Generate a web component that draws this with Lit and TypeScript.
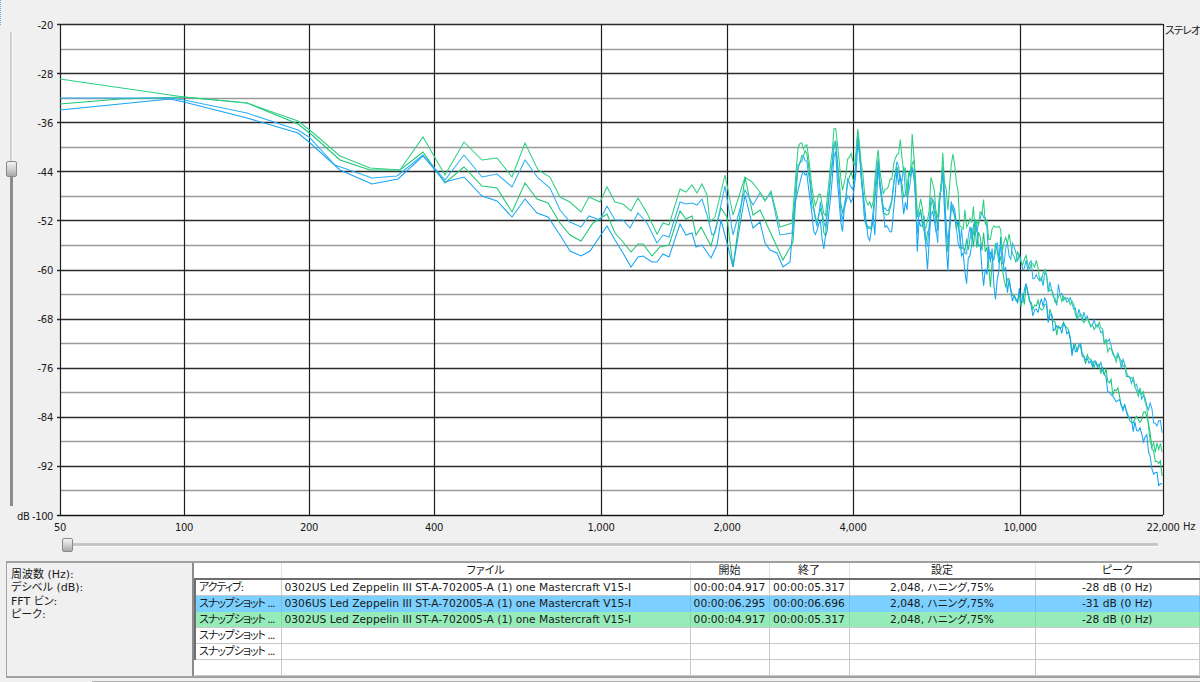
import { LitElement, html, css, svg } from "lit";
import { customElement } from "lit/decorators.js";

type P = [number, number];

const GU0: P[] = [[60,79],[184,97],[247,103],[298,121],[312,132],[340,156],[370,168],[400,170],[423,137],[445,175],[464,142],[482,160],[497,158],[512,177],[525,143],[538,170],[550,177],[560,197],[570,202],[581,212],[589,197],[600,202],[607,187],[615,202],[623,204],[631,211],[638,198],[647,213],[657,234],[663,223],[669,225],[680,189],[686,192],[692,185],[697,193],[702,184],[707,195],[710,222],[715,217],[725,175],[733,215],[745,177],[752,182],[760,192],[765,201],[771,191],[780,227],[792,223],[798,148],[807,143],[812,190],[816,207],[820,190],[825,223],[835,120],[842,193],[850,150],[854,167],[858,127],[865,200],[872,210],[878,150],[883,193],[889,188],[897,153],[902,153],[907,183],[913,142],[918,210],[920,192],[927,227],[932,172],[937,217],[943,152],[947,210],[952,157],[957,197],[962,227],[972,207],[977,223],[982,197],[990,243],[998,210],[1002,243],[1007,227],[1012,254],[1022,260],[1033,270],[1047,280],[1053,293],[1067,300],[1077,313],[1088,322],[1100,328],[1107,343],[1118,357],[1127,373],[1137,387],[1147,405],[1150,440],[1163,450]];
const GL0: P[] = [[60,104],[120,99],[184,97],[247,103],[298,124],[312,135],[340,160],[370,170],[400,170],[423,152],[445,183],[464,167],[482,186],[497,188],[512,212],[525,183],[537,199],[548,203],[560,223],[570,235],[581,241],[593,223],[607,214],[615,233],[623,242],[631,252],[638,244],[643,244],[652,256],[660,247],[669,245],[680,211],[686,219],[692,216],[696,235],[701,227],[711,246],[721,208],[727,217],[733,267],[745,177],[753,215],[760,210],[767,225],[773,238],[783,260],[793,242],[798,165],[807,150],[812,200],[817,225],[821,205],[825,240],[835,132],[842,215],[850,172],[854,185],[858,135],[865,222],[872,232],[878,165],[883,213],[890,212],[897,162],[902,180],[907,200],[913,150],[918,228],[921,212],[927,250],[932,180],[937,235],[943,163],[947,240],[952,200],[957,220],[963,250],[972,232],[977,245],[982,232],[988,270],[998,255],[1002,262],[1008,290],[1017,300],[1027,293],[1033,307],[1048,310],[1053,323],[1067,330],[1072,353],[1080,347],[1090,363],[1105,373],[1117,395],[1130,417],[1147,418],[1153,450],[1163,473]];
const BU0: P[] = [[60,98],[170,98],[184,100],[247,113],[298,130],[309,137],[335,165],[372,178],[397,176],[423,155],[445,180],[464,155],[482,177],[497,174],[512,187],[525,160],[538,178],[550,188],[560,210],[570,222],[581,227],[589,216],[600,220],[607,206],[615,220],[623,220],[630,228],[638,213],[647,223],[657,243],[663,235],[669,237],[680,202],[686,204],[692,203],[697,205],[702,199],[707,215],[712,235],[715,233],[725,186],[733,235],[745,190],[753,205],[760,193],[765,200],[771,193],[780,235],[792,233],[797,173],[802,158],[807,158],[812,205],[817,225],[821,200],[825,232],[835,135],[842,225],[848,178],[853,195],[858,133],[865,225],[872,225],[878,158],[883,208],[890,210],[897,160],[902,170],[907,205],[913,150],[918,232],[922,205],[927,250],[932,180],[937,235],[943,165],[947,250],[952,205],[957,225],[963,255],[972,225],[977,240],[982,215],[990,255],[998,240],[1002,255],[1007,247],[1022,260],[1033,270],[1047,280],[1053,293],[1067,300],[1077,313],[1088,322],[1100,328],[1107,343],[1118,357],[1127,373],[1137,387],[1147,403],[1157,420],[1163,433]];
const BL0: P[] = [[60,110],[170,99],[184,102],[247,118],[298,133],[309,142],[340,170],[372,184],[398,179],[423,156],[445,182],[464,177],[482,196],[497,201],[512,217],[525,199],[537,213],[548,217],[560,235],[570,251],[581,256],[590,251],[607,226],[615,240],[623,253],[631,267],[638,257],[643,256],[652,262],[657,262],[663,254],[669,257],[680,224],[686,235],[692,233],[696,247],[702,245],[711,258],[717,245],[721,220],[727,243],[733,267],[745,195],[753,228],[760,222],[765,243],[770,250],[777,253],[783,267],[790,262],[795,203],[802,172],[807,175],[812,215],[815,238],[820,215],[823,253],[828,225],[835,147],[842,240],[845,197],[853,202],[858,143],[869,245],[873,215],[875,237],[878,167],[885,225],[892,233],[897,170],[905,217],[913,160],[918,247],[923,207],[927,270],[932,187],[937,243],[942,173],[948,277],[952,197],[960,243],[967,273],[973,220],[982,263],[986,283],[990,243],[996,297],[1000,253],[1004,263],[1008,290],[1017,300],[1027,293],[1033,307],[1048,310],[1053,323],[1067,330],[1072,353],[1080,347],[1090,363],[1105,373],[1108,393],[1117,400],[1130,420],[1140,433],[1147,443],[1153,470],[1163,485]];

function rng(seed: number) {
  return () => {
    seed = (seed + 0x6d2b79f5) | 0;
    let t = Math.imul(seed ^ (seed >>> 15), 1 | seed);
    t = (t + Math.imul(t ^ (t >>> 7), 61 | t)) ^ t;
    return ((t ^ (t >>> 14)) >>> 0) / 4294967296 - 0.5;
  };
}
function at(a: P[], x: number) {
  for (let i = 1; i < a.length; i++) {
    if (x <= a[i][0]) {
      const [x0, y0] = a[i - 1];
      const [x1, y1] = a[i];
      return y0 + ((y1 - y0) * (x - x0)) / (x1 - x0);
    }
  }
  return a[a.length - 1][1];
}
function amp(x: number) {
  if (x < 800) return 0;
  if (x < 900) return 9;
  if (x < 1010) return 34;
  if (x < 1060) return 20;
  return 15;
}
const STEP = 1.7;
const sharedR = rng(11);
const shared: number[] = Array.from({ length: 260 }, () => sharedR());
function build(a: P[], seed: number) {
  const r = rng(seed);
  const pts: string[] = [];
  for (const [x, y] of a) if (x < 800) pts.push(`${x},${y}`);
  let i = 0;
  for (let x = 800; x <= 1163; x += STEP, i++) {
    const n = amp(x) * (0.45 * shared[i] + 0.8 * r());
    const y = Math.min(at(a, x) + n, 488);
    pts.push(`${x.toFixed(1)},${y.toFixed(1)}`);
  }
  return pts.join(" ");
}
const traces = [
  { d: build(GL0, 3), c: "#1cc674" },
  { d: build(BL0, 5), c: "#14a4f4" },
  { d: build(BU0, 9), c: "#2bb0f5" },
  { d: build(GU0, 7), c: "#2ccf82" },
];

const yTop = 24;
const yStep = 24.55;
const hLines = Array.from({ length: 21 }, (_, i) => ({ y: Math.round(yTop + i * yStep) + 0.5, major: i % 2 === 0 }));
const yLabels = Array.from({ length: 10 }, (_, i) => ({ t: String(-20 - i * 8), y: yTop + i * 2 * yStep }));
const xTicks: [number, string][] = [[60,"50"],[184,"100"],[309,"200"],[434,"400"],[601,"1,000"],[727,"2,000"],[853,"4,000"],[1020,"10,000"],[1163,"22,000"]];

const FILE_A = "0302US Led Zeppelin III ST-A-702005-A (1) one Mastercraft V15-I";
const FILE_B = "0306US Led Zeppelin III ST-A-702005-A (1) one Mastercraft V15-I";
const SET = "2,048, ハニング,75%";
const rows = [
  { cls: "", cells: ["アクティブ:", FILE_A, "00:00:04.917", "00:00:05.317", SET, "-28 dB (0 Hz)"] },
  { cls: "blue", cells: ["スナップショット ...", FILE_B, "00:00:06.295", "00:00:06.696", SET, "-31 dB (0 Hz)"] },
  { cls: "green", cells: ["スナップショット ...", FILE_A, "00:00:04.917", "00:00:05.317", SET, "-28 dB (0 Hz)"] },
  { cls: "", cells: ["スナップショット ...", "", "", "", "", ""] },
  { cls: "", cells: ["スナップショット ...", "", "", "", "", ""] },
  { cls: "", cells: ["", "", "", "", "", ""] },
];

@customElement("app-root")
export class AppRoot extends LitElement {
  static styles = css`
    :host {
      display: block;
      position: relative;
      width: 1200px;
      height: 682px;
      overflow: hidden;
      background: #f0f0f0;
      color: #1a1a1a;
      font: 10.7px "DejaVu Sans", "Noto Sans CJK JP", sans-serif;
      font-feature-settings: "palt";
    }
    .dots { position: absolute; left: 0; top: 0; width: 1px; height: 25px; border-left: 1px dotted #6fa8dc; }
    .top { display: flex; height: 534px; }
    .vslider { width: 17px; flex: none; position: relative; }
    .vtrack-a { position: absolute; left: 10px; top: 32px; width: 2px; height: 130px; background: #cfcfcf; border-right: 1px solid #fafafa; }
    .vtrack-b { position: absolute; left: 10px; top: 176px; width: 3px; height: 330px; background: #8c8c8c; }
    .vthumb { position: absolute; left: 6px; top: 161px; width: 11px; height: 16px; }
    .thumb {
      box-sizing: border-box;
      border: 1px solid #8a8a8a;
      border-radius: 2px;
      background: linear-gradient(#f4f4f4, #c9c9c9 60%, #a8a8a8);
    }
    svg.chart { display: block; width: 1183px; height: 534px; }
    svg text { font: 10px "DejaVu Sans", "Noto Sans CJK JP", sans-serif; fill: #1a1a1a; font-feature-settings: "palt"; letter-spacing: -0.3px; }
    svg text.db { letter-spacing: -0.45px; }
    svg text.ch { font-size: 10.7px; letter-spacing: -0.9px; }
    .hslider { height: 27px; padding: 9px 0 0 62px; box-sizing: border-box; }
    .htrack { position: relative; width: 1096px; height: 3px; background: #c6c6c6; border-bottom: 1px solid #fafafa; }
    .hthumb { position: absolute; left: 0; top: -5px; width: 11px; height: 14px; }
    .panel {
      display: flex;
      margin-left: 6px;
      height: 117px;
      box-sizing: border-box;
      border: 1px solid #a0a0a0;
      border-width: 2px 0 2px 1px;
    }
    .info {
      width: 187px;
      flex: none;
      padding: 4.5px 0 0 4px;
      box-sizing: border-box;
      border-right: 2px solid #8c8c8c;
      font-size: 11px;
      line-height: 13.6px;
    }
    .tablewrap { flex: 1; background: #fff; min-width: 0; }
    table {
      table-layout: fixed;
      width: 100%;
      border-collapse: collapse;
      font-size: 10.7px;
    }
    th, td {
      padding: 0;
      height: 16px;
      line-height: 13px;
      box-sizing: border-box;
      white-space: nowrap;
      overflow: hidden;
      font-weight: normal;
      text-align: center;
      border-right: 1px solid #c8c8c8;
      border-bottom: 1px solid #c8c8c8;
    }
    th { border-right-color: #e4e4e4; border-bottom: 2px solid #6e6e6e; font-size: 11px; }
    td.name { text-align: left; padding-left: 3px; font-size: 11px; letter-spacing: -1.1px; }
    td.name:not(:empty) { border-left: 2px solid #6e6e6e; }
    td.file { text-align: left; padding-left: 3px; }
    tr.blue td { background: #7bd0ff; border-bottom-color: #7bd0ff; border-right-color: #6cbde8; }
    tr.green td { background: #95ecb9; border-right-color: #85d8a8; }
    tr.blue td.name, tr.green td.name { border-left-color: #6e6e6e; }
    .foot { height: 1px; margin: 3px 0 0 92px; background: #b0b0b0; }
  `;

  render() {
    return html`
      <div class="dots"></div>
      <div class="top">
        <div class="vslider">
          <div class="vtrack-a"></div>
          <div class="vtrack-b"></div>
          <div class="vthumb thumb"></div>
        </div>
        <svg class="chart" viewBox="17 0 1183 534">
          <rect x="60" y="24" width="1103" height="491" fill="#fff"></rect>
          ${hLines.map((l) => svg`<line x1="${l.major ? 57 : 60}" x2="1163" y1="${l.y}" y2="${l.y}" stroke="${l.major ? "#2b2b2b" : "#9a9a9a"}" stroke-width="${l.major ? 1.3 : 1.5}"></line>`)}
          ${xTicks.map(([x]) => svg`<line x1="${x + 0.5}" x2="${x + 0.5}" y1="24" y2="515" stroke="#1e1e1e" stroke-width="1.2"></line>`)}
          <line x1="57" x2="1163" y1="515.5" y2="515.5" stroke="#111" stroke-width="1"></line>
          ${traces.map((t) => svg`<polyline points="${t.d}" fill="none" stroke="${t.c}" stroke-width="1.05"></polyline>`)}
          ${yLabels.map((l) => svg`<text x="53" y="${l.y + 4.5}" text-anchor="end">${l.t}</text>`)}
          <text class="db" x="53" y="520" text-anchor="end">dB -100</text>
          ${xTicks.map(([x, t]) => svg`<text x="${x}" y="531" text-anchor="middle">${t}</text>`)}
          <text x="1183" y="530">Hz</text>
          <text class="ch" x="1165" y="34">ステレオ</text>
        </svg>
      </div>
      <div class="hslider">
        <div class="htrack"><div class="hthumb thumb"></div></div>
      </div>
      <div class="panel">
        <div class="info">
          <div>周波数 (Hz):</div>
          <div>デシベル (dB):</div>
          <div>FFT ビン:</div>
          <div>ピーク:</div>
        </div>
        <div class="tablewrap">
          <table>
            <colgroup>
              <col style="width:86px" /><col style="width:409px" /><col style="width:79px" /><col style="width:80px" /><col style="width:186px" /><col />
            </colgroup>
            <thead>
              <tr><th></th><th>ファイル</th><th>開始</th><th>終了</th><th>設定</th><th>ピーク</th></tr>
            </thead>
            <tbody>
              ${rows.map(
                (r) => html`<tr class="${r.cls}">
                  <td class="name">${r.cells[0]}</td>
                  <td class="file">${r.cells[1]}</td>
                  <td>${r.cells[2]}</td>
                  <td>${r.cells[3]}</td>
                  <td>${r.cells[4]}</td>
                  <td>${r.cells[5]}</td>
                </tr>`
              )}
            </tbody>
          </table>
        </div>
      </div>
      <div class="foot"></div>
    `;
  }
}
